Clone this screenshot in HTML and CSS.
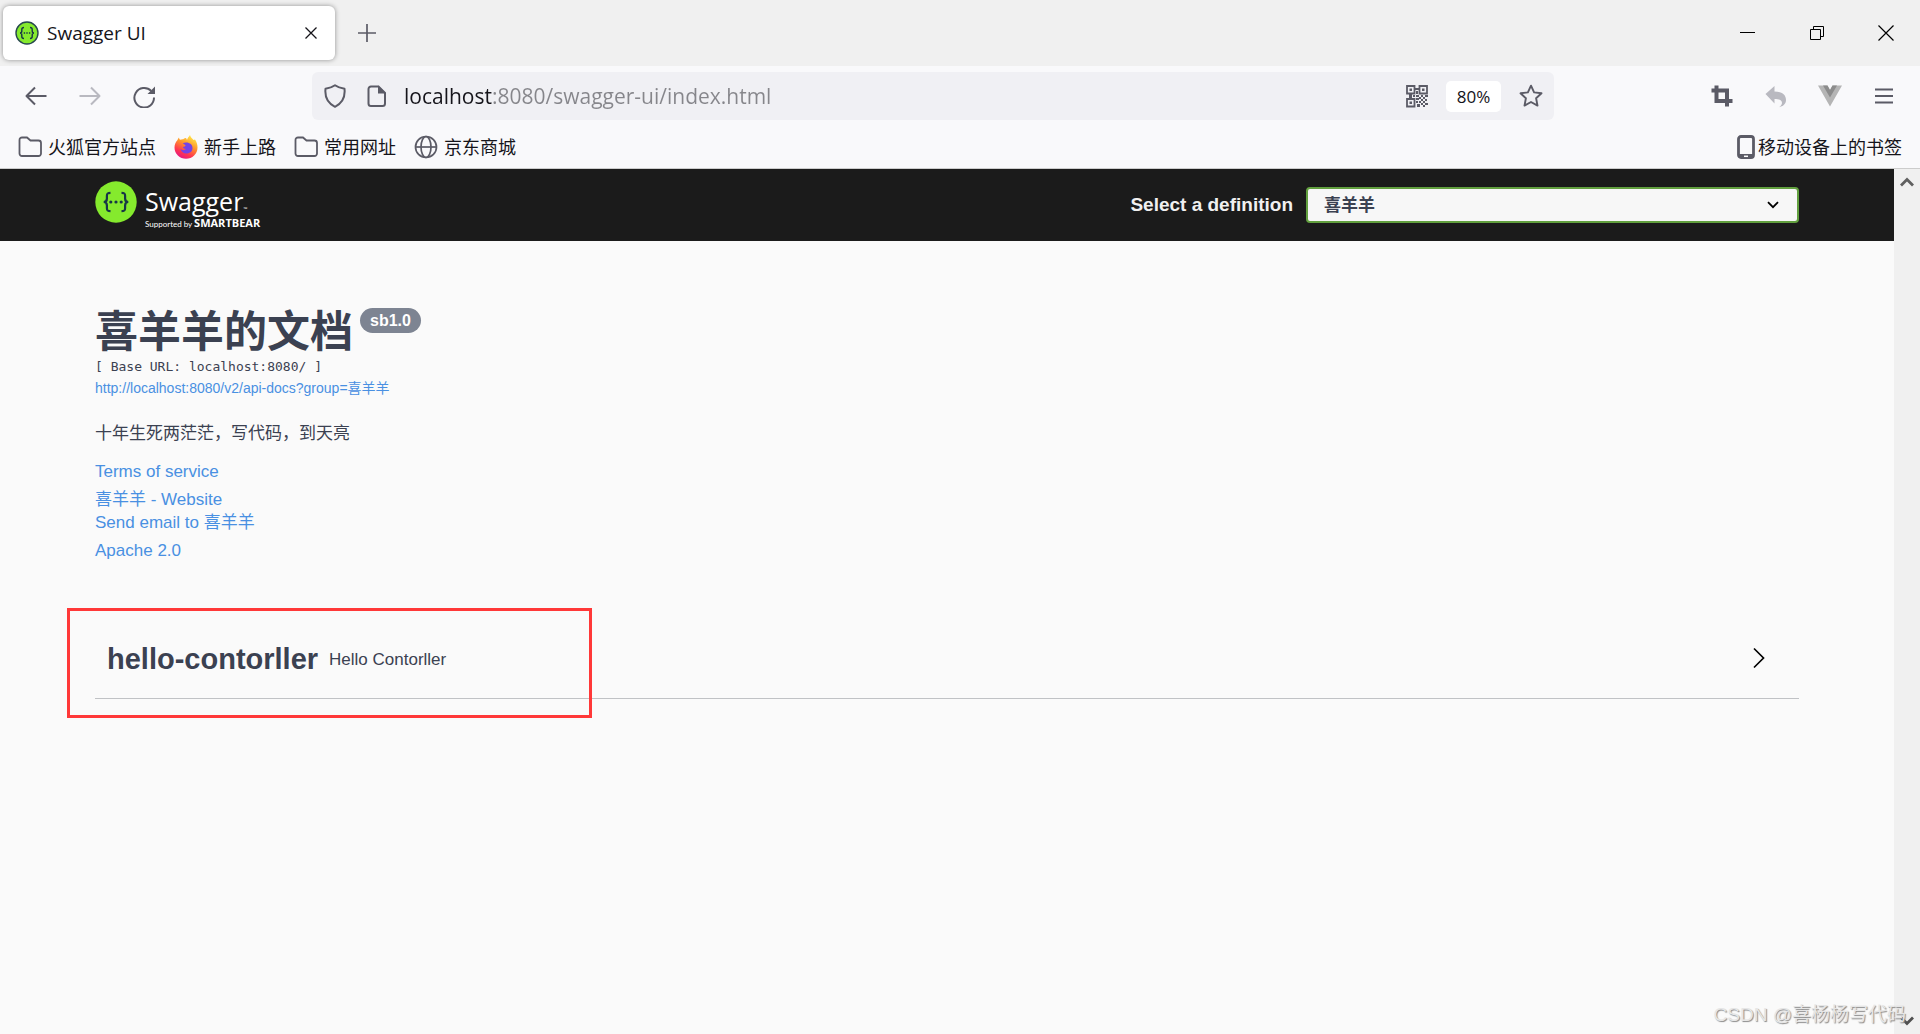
FILE: index.html
```html
<!DOCTYPE html>
<html lang="zh-CN">
	<head>
		<meta charset="UTF-8">
		<title>Swagger UI</title>
		<link rel="stylesheet" href="styles.css">
	</head>
	<body>
		<div class="tab-bar">
			<div class="tab">
				<svg class="favicon" viewBox="0 0 24 24" width="24" height="24">
					<circle cx="12" cy="12" r="11" fill="#85ea2d" stroke="#27474f" stroke-width="1.4"/>
					<path d="M9 6.5c-2 0-2.2.6-2.2 2v1.6c0 1.2-.5 1.9-1.8 1.9 1.3 0 1.8.7 1.8 1.9v1.6c0 1.4.2 2 2.2 2M15 6.5c2 0 2.2.6 2.2 2v1.6c0 1.2.5 1.9 1.8 1.9-1.3 0-1.8.7-1.8 1.9v1.6c0 1.4-.2 2-2.2 2" fill="none" stroke="#173647" stroke-width="1.4"/>
					<path d="M8.7 12h1.4m1.2 0h1.4m1.2 0h1.4" stroke="#173647" stroke-width="1.5"/>
				</svg>
				<span class="tab-title">Swagger UI</span>
				<button class="tab-close" aria-label="Close tab">
					<svg viewBox="0 0 12 12" width="12" height="12"><path d="M.5.5l11 11M11.5.5l-11 11" stroke="#15141a" stroke-width="1.3"/></svg>
				</button>
			</div>
			<button class="new-tab" aria-label="New tab">
				<svg viewBox="0 0 18 18" width="18" height="18"><path d="M9 0v18M0 9h18" stroke="#5b5b66" stroke-width="1.7"/></svg>
			</button>
			<div class="window-buttons">
				<button aria-label="Minimize">
					<svg viewBox="0 0 16 16" width="16" height="16"><path d="M0 7.5h15" stroke="#000"/></svg>
				</button>
				<button aria-label="Restore">
					<svg viewBox="0 0 16 16" width="16" height="16"><path d="M1.5 4.5h10v10h-10zM4.5 4.5v-3h10v10h-3" fill="none" stroke="#000"/></svg>
				</button>
				<button aria-label="Close">
					<svg viewBox="0 0 16 16" width="16" height="16"><path d="M.5.5l15 15M15.5.5l-15 15" stroke="#000" stroke-width="1.2"/></svg>
				</button>
			</div>
		</div>

		<div class="toolbar">
			<div class="nav-buttons">
				<button aria-label="Back">
					<svg viewBox="0 0 24 24" width="24" height="24"><path d="M22.5 12H3M11 3.5L2.5 12l8.5 8.5" fill="none" stroke="#5b5b66" stroke-width="2" stroke-linejoin="round"/></svg>
				</button>
				<button aria-label="Forward" disabled>
					<svg viewBox="0 0 24 24" width="24" height="24"><path d="M1.5 12H21M13 3.5l8.5 8.5-8.5 8.5" fill="none" stroke="#b9b9c0" stroke-width="2" stroke-linejoin="round"/></svg>
				</button>
				<button aria-label="Reload">
					<svg viewBox="0 0 24 24" width="24" height="24"><path d="M22 13.5a9.8 9.8 0 1 1-2.8-6.6" fill="none" stroke="#5b5b66" stroke-width="2"/><path d="M23 2.5v7.5H15.5z" fill="#5b5b66"/></svg>
				</button>
			</div>
			<div class="url-bar">
				<svg viewBox="0 0 24 24" width="24" height="24"><path d="M12 1.2c3.2 2.3 6.5 3 9.5 3.6.8 7.5-2 14.2-9.5 18-7.5-3.8-10.3-10.5-9.5-18 3-.6 6.3-1.3 9.5-3.6z" fill="none" stroke="#5b5b66" stroke-width="2" stroke-linejoin="round"/></svg>
				<svg viewBox="0 0 24 24" width="24" height="24"><path d="M13.5 2.5H6A2.5 2.5 0 0 0 3.5 5v14.5A2.5 2.5 0 0 0 6 22h11.5a2.5 2.5 0 0 0 2.5-2.5V9z" fill="none" stroke="#5b5b66" stroke-width="2"/><path d="M13 1.5l8 8h-8z" fill="#5b5b66"/></svg>
				<input class="url-input" type="text" aria-label="Address" value="localhost:8080/swagger-ui/index.html">
				<button aria-label="QR code">
					<svg viewBox="0 0 22 24" width="22" height="24">
						<path d="M1 2h7.5v7.5H1zM13.5 2H21v7.5h-7.5zM1 15h7.5v7.5H1z" fill="none" stroke="#5b5b66" stroke-width="1.8"/>
						<path d="M3.5 4.5h2.5V7H3.5zM16 4.5h2.5V7H16zM3.5 17.5h2.5V20H3.5zM9 4h4v2H9zM10 7h2v3h-2zM3 10h3v4H3zM7 11h2v2H7zM10 11h3v2h-3zM13 13h2v2h-2zM15 11h2v2h-2zM17 13h2v2h-2zM19 11h3v2h-3zM10 14h3v2h-3zM15 15h2v2h-2zM19 15h2v2h-2zM13 17h2v2h-2zM17 17h2v2h-2zM10 17h2v2h-2zM15 19h2v2h-2zM19 19h3v2h-3zM11 20h3v3h-3zM17 21h2v2h-2z" fill="#5b5b66"/>
					</svg>
				</button>
				<button class="zoom-level">80%</button>
				<button aria-label="Bookmark this page">
					<svg viewBox="0 0 24 24" width="24" height="24"><path d="M12 1.7l3.1 6.7 7.4.9-5.4 5 1.4 7.3-6.5-3.6-6.5 3.6 1.4-7.3-5.4-5 7.4-.9z" fill="none" stroke="#5b5b66" stroke-width="1.9" stroke-linejoin="round"/></svg>
				</button>
			</div>
			<div class="extension-buttons">
				<button aria-label="Screenshot">
					<svg viewBox="0 0 24 24" width="24" height="24"><path d="M6.5 1.5V17h16M1.5 6.5H17v16" fill="none" stroke="#5b5b66" stroke-width="4"/></svg>
				</button>
				<button aria-label="Undo" disabled>
					<svg viewBox="0 0 24 24" width="24" height="24"><path d="M10.5 2v5.5c7 0 11.5 3 11.5 8.5 0 4-3 6.5-7 7.2 3-2.2 3.5-4.2 2.5-6-1-1.7-3.5-2.2-7-2.2v4.5L1.5 10z" fill="#b9b9c0"/></svg>
				</button>
				<button aria-label="Vue.js devtools">
					<svg viewBox="0 0 24 24" width="24" height="24"><path d="M0 1.5h9.5L12 6l2.5-4.5H24L12 22.5z" fill="#b5b5b5"/><path d="M5 1.5h4.5L12 6l2.5-4.5H19l-7 12z" fill="#8c8c8c"/></svg>
				</button>
				<button aria-label="Menu">
					<svg viewBox="0 0 24 24" width="24" height="24"><path d="M3 5.5h18M3 12h18M3 18.5h18" stroke="#5b5b66" stroke-width="1.8"/></svg>
				</button>
			</div>
		</div>

		<div class="bookmarks">
			<button>
				<svg viewBox="0 0 24 24" width="24" height="24"><path d="M1.5 18.5V5A2.5 2.5 0 0 1 4 2.5h5l3.500 3h8A2.500 2.500 0 0 1 23 8v10.500a2.500 2.500 0 0 1-2.500 2.500H4a2.500 2.500 0 0 1-2.500-2.500z" fill="none" stroke="#5b5b66" stroke-width="1.800"/></svg>
				火狐官方站点
			</button>
			<button>
				<svg viewBox="0 0 24 24" width="24" height="24">
					<defs>
						<linearGradient id="flame" x1=".8" y1="0" x2=".3" y2="1">
							<stop offset="0" stop-color="#fff44f"/>
							<stop offset=".4" stop-color="#ff9a2a"/>
							<stop offset=".75" stop-color="#ff3750"/>
							<stop offset="1" stop-color="#e31587"/>
						</linearGradient>
					</defs>
					<path d="M3.5 5c.2-1 .8-1.8 1.5-2.5 0 1 .4 1.7 1 2.2 1-.4 2.2-.6 3.2-.5.8-.8 2-1.2 3-1.2 0 .8.3 1.3.9 1.7C13.500 3 15 1.500 16 0c.5 2.500 2 3.200 3.500 5l1.500-.5c1.600 2.200 2.500 5 2.500 8A11.500 11.300 0 0 1 .5 12.500C.5 9.500 1.800 6.800 3.500 5z" fill="url(#flame)"/>
					<path d="M12 7.500c4 0 6.500 2.300 6.500 5.500s-2.500 5.500-6 5.500c-3 0-5.500-2-6-4.500 1.500 1.500 4 1.500 5.500 0-1.500 0-3-.8-3-2 1.500-.3 2.500-.8 2.500-1.800C10.800 9.500 9.500 9 8.800 8.500c1-.7 2-1 3.200-1z" fill="#7542e5"/>
				</svg>
				新手上路
			</button>
			<button>
				<svg viewBox="0 0 24 24" width="24" height="24"><path d="M1.5 18.5V5A2.5 2.5 0 0 1 4 2.5h5l3.500 3h8A2.500 2.500 0 0 1 23 8v10.500a2.500 2.500 0 0 1-2.500 2.500H4a2.500 2.500 0 0 1-2.500-2.500z" fill="none" stroke="#5b5b66" stroke-width="1.800"/></svg>
				常用网址
			</button>
			<button>
				<svg viewBox="0 0 24 24" width="24" height="24"><g fill="none" stroke="#5b5b66" stroke-width="1.7"><circle cx="12" cy="12" r="10.5"/><ellipse cx="12" cy="12" rx="5" ry="10.5"/><path d="M1.5 12h21"/></g></svg>
				京东商城
			</button>
			<button class="mobile-bookmarks">
				<svg viewBox="0 0 18 24" width="18" height="24"><rect x="1.5" y="1.5" width="15" height="21" rx="2.5" fill="none" stroke="#5b5b66" stroke-width="2.8"/><path d="M1 19h16v3H1z" fill="#5b5b66"/><path d="M7 21.3h4" stroke="#fff" stroke-width="1.5"/></svg>
				移动设备上的书签
			</button>
		</div>

		<div class="viewport">
			<div class="page">
				<div class="topbar">
					<div class="wrapper topbar-wrapper">
						<a class="logo" href="#">
							<svg viewBox="0 0 42 42" width="42" height="42">
								<circle cx="21" cy="21" r="20.7" fill="#85ea2d"/>
								<path d="M15.5 11.8c-3 0-3.6.8-3.6 3v2.7c0 2.3-.8 3.5-3.2 3.5 2.4 0 3.2 1.2 3.2 3.5v2.7c0 2.2.6 3 3.6 3M26.5 11.8c3 0 3.6.8 3.6 3v2.7c0 2.3.8 3.5 3.2 3.5-2.4 0-3.2 1.2-3.2 3.5v2.7c0 2.2-.6 3-3.6 3" fill="none" stroke="#173647" stroke-width="2.2"/>
								<g fill="#173647"><circle cx="15.8" cy="21" r="1.6"/><circle cx="21" cy="21" r="1.6"/><circle cx="26.2" cy="21" r="1.6"/></g>
							</svg>
							<span class="logo-text">
								<span class="logo-name">Swagger<small>™</small></span>
								<span class="logo-by">Supported by <b>SMARTBEAR</b></span>
							</span>
						</a>
						<label class="definition-label" for="definition">Select a definition</label>
						<div class="select-box">
							<select id="definition">
								<option>喜羊羊</option>
							</select>
							<svg viewBox="0 0 12 8" width="12" height="8"><path d="M1 1.2l5 5 5-5" fill="none" stroke="#000" stroke-width="1.8"/></svg>
						</div>
					</div>
				</div>

				<div class="wrapper">
					<div class="info">
						<h1 class="title">喜羊羊的文档 <span class="version">sb1.0</span></h1>
						<pre class="base-url">[ Base URL: localhost:8080/ ]</pre>
						<a class="docs-link" href="#">http://localhost:8080/v2/api-docs?group=喜羊羊</a>
						<p class="description">十年生死两茫茫，写代码，到天亮</p>
						<div class="info-links"><a href="#">Terms of service</a></div>
						<div class="info-links">
							<a href="#">喜羊羊 - Website</a>
							<a href="#">Send email to 喜羊羊</a>
						</div>
						<div class="info-links"><a href="#">Apache 2.0</a></div>
					</div>

					<div class="tag-section">
						<h3 class="tag-name">hello-contorller</h3>
						<span class="tag-description">Hello Contorller</span>
						<button class="expand" aria-label="Expand operation">
							<svg viewBox="0 0 12 22" width="12" height="22"><path d="M1 1.5l9.5 9.5L1 20.5" fill="none" stroke="#000" stroke-width="1.7"/></svg>
						</button>
						<div class="highlight"></div>
					</div>
				</div>
			</div>

			<div class="scrollbar">
				<button aria-label="Scroll up">
					<svg viewBox="0 0 14 12" width="14" height="12"><path d="M1 9.5l6-6 6 6" fill="none" stroke="#606060" stroke-width="2.8"/></svg>
				</button>
				<button aria-label="Scroll down">
					<svg viewBox="0 0 14 12" width="14" height="12"><path d="M1 2.5l6 6 6-6" fill="none" stroke="#505050" stroke-width="2.8"/></svg>
				</button>
			</div>
			<div class="watermark">CSDN @喜杨杨写代码</div>
		</div>
	</body>
</html>
```
FILE: styles.css
```css
* {
	box-sizing: border-box;
}
body {
	margin: 0;
	min-height: 100vh;
	display: flex;
	flex-direction: column;
	background: #fafafa;
	font-family: "Open Sans", "Noto Sans CJK SC", sans-serif;
	color: #15141a;
}
button {
	display: flex;
	align-items: center;
	justify-content: center;
	padding: 0;
	border: 0;
	background: transparent;
	color: inherit;
	font-family: inherit;
	cursor: pointer;
}
svg {
	display: block;
	flex-shrink: 0;
}
a {
	color: #4990e2;
	text-decoration: none;
}

/* browser tabs */
.tab-bar {
	display: flex;
	align-items: center;
	height: 66px;
	padding-left: 3px;
	background: #f0f0f0;
}
.tab {
	display: flex;
	align-items: center;
	width: 332px;
	height: 54px;
	padding: 0 12px;
	border-radius: 6px;
	background: #fff;
	box-shadow: 0 0 5px rgba(0, 0, 0, 0.4);
}
.tab-title {
	margin-left: 8px;
	font-size: 19px;
}
.tab-close {
	width: 24px;
	height: 24px;
	margin-left: auto;
}
.new-tab {
	width: 48px;
	height: 48px;
	margin-left: 8px;
}
.window-buttons {
	display: flex;
	margin-left: auto;
}
.window-buttons button {
	width: 69px;
	height: 66px;
}

/* address bar */
.toolbar {
	display: flex;
	align-items: center;
	height: 60px;
	padding: 0 9px;
	background: #f9f9fb;
}
.nav-buttons,
.extension-buttons {
	display: flex;
}
.nav-buttons button,
.extension-buttons button {
	width: 54px;
	height: 48px;
}
.url-bar {
	display: flex;
	align-items: center;
	gap: 18px;
	flex: 1;
	height: 48px;
	margin: 0 141px;
	padding: 0 11px;
	border-radius: 6px;
	background: #f0f0f4;
}
.url-input {
	flex: 1;
	min-width: 0;
	height: 40px;
	margin-left: -3px;
	padding: 0;
	border: 0;
	outline: 0;
	/* host is dark, port and path are dimmed */
	background: linear-gradient(90deg, #15141a 89px, #86868b 89px);
	background-clip: text;
	-webkit-background-clip: text;
	color: transparent;
	font-family: inherit;
	font-size: 21px;
}
.zoom-level {
	width: 55px;
	height: 31px;
	border-radius: 5px;
	background: #fff;
	font-size: 17px;
}

.bookmarks {
	display: flex;
	align-items: center;
	gap: 18px;
	height: 43px;
	padding: 0 18px;
	border-bottom: 1px solid #ccc;
	background: #f9f9fb;
}
.bookmarks button {
	gap: 6px;
	font-size: 18px;
	line-height: 24px;
}
.bookmarks .mobile-bookmarks {
	gap: 3px;
	margin-left: auto;
}

/* swagger page */
.viewport {
	position: relative;
	display: flex;
	flex: 1;
}
.page {
	flex: 1;
	font-family: "Liberation Sans", "Noto Sans CJK SC", sans-serif;
	color: #3b4151;
}
.wrapper {
	max-width: 1752px;
	margin: 0 auto;
	padding: 0 24px;
}
.topbar {
	background: #1b1b1b;
}
.topbar-wrapper {
	display: flex;
	align-items: center;
	height: 72px;
}
.logo {
	display: flex;
	gap: 8px;
	margin-right: auto;
	color: #fff;
	font-family: "Open Sans", sans-serif;
}
.logo-text {
	display: flex;
	flex-direction: column;
	padding-top: 4px;
}
.logo-name {
	font-size: 25px;
	line-height: 32px;
}
.logo-name small {
	font-size: 5px;
	line-height: 1;
}
.logo-by {
	font-family: Lato, sans-serif;
	font-size: 8px;
	line-height: 12px;
}
.logo-by b {
	font-family: "Open Sans", sans-serif;
	font-size: 11px;
	line-height: 1;
}
.definition-label {
	color: #f0f0f0;
	font-size: 19px;
	font-weight: bold;
}
.select-box {
	display: grid;
	align-items: center;
	width: 493px;
	margin-left: 13px;
}
.select-box select {
	grid-area: 1 / 1;
	width: 100%;
	height: 36px;
	padding: 0 16px;
	appearance: none;
	border: 2px solid #62a03f;
	border-radius: 4px;
	background: #f7f7f7;
	color: #3b4151;
	font-family: inherit;
	font-size: 17px;
	font-weight: bold;
}
.select-box svg {
	grid-area: 1 / 1;
	justify-self: end;
	margin-right: 20px;
	pointer-events: none;
}

.info {
	padding: 67px 0 56px;
	font-size: 17px;
}
.title {
	display: flex;
	align-items: flex-start;
	gap: 7px;
	margin: 0;
	font-size: 43px;
	line-height: 48px;
}
.version {
	padding: 0 10px;
	border-radius: 13px;
	background: #7d8492;
	color: #fff;
	font-size: 16px;
	line-height: 25px;
}
.base-url {
	margin: 0;
	font-family: "DejaVu Sans Mono", monospace;
	font-size: 13px;
	line-height: 22px;
}
.docs-link {
	display: block;
	font-size: 14px;
	line-height: 21px;
}
.description {
	margin: 23px 0 14px;
	line-height: 24px;
}
.info-links {
	margin-top: 5px;
}
.info-links a {
	display: block;
	width: fit-content;
	line-height: 23px;
}

.tag-section {
	position: relative;
	display: flex;
	align-items: center;
	height: 81px;
	padding: 0 24px 0 12px;
	border-bottom: 1px solid #c0c2c5;
}
.tag-name {
	margin: 0;
	padding-top: 2px;
	font-size: 29px;
}
.tag-description {
	margin-left: 11px;
	padding-top: 4px;
	font-size: 17px;
}
.expand {
	width: 32px;
	height: 40px;
	margin-left: auto;
}
.highlight {
	position: absolute;
	top: -10px;
	left: -28px;
	width: 525px;
	height: 110px;
	border: 3px solid #ff3838;
	pointer-events: none;
}

.scrollbar {
	display: flex;
	flex-direction: column;
	justify-content: space-between;
	width: 26px;
	background: #f0f0f0;
}
.scrollbar button {
	height: 26px;
}
.watermark {
	position: absolute;
	right: 14px;
	bottom: 4px;
	color: #e6e6e6;
	font-family: "Liberation Sans", "Noto Sans CJK SC", sans-serif;
	font-size: 19px;
	line-height: 30px;
	text-shadow: 1px 1px 1px #888;
}
```
